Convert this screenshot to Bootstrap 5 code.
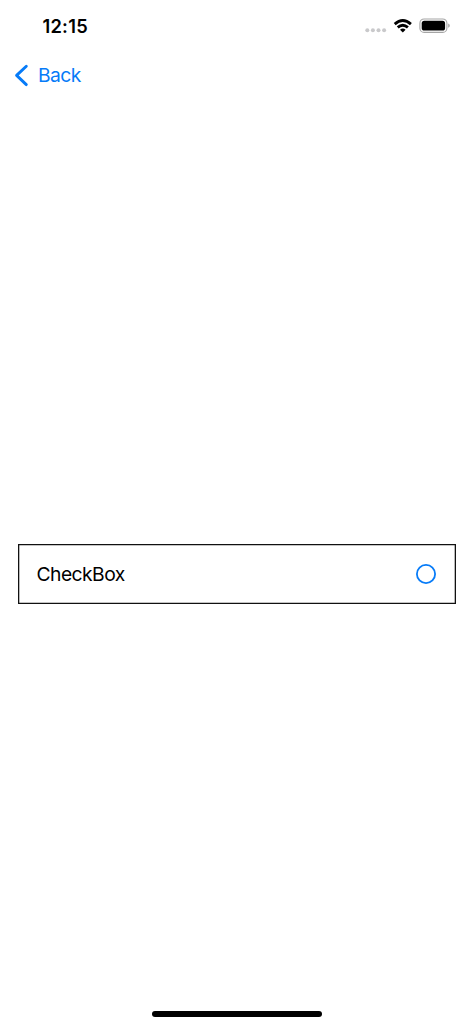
<!DOCTYPE html>
<html lang="en">
<head>
    <meta charset="UTF-8">
    <title>CheckBox</title>
    <meta name="viewport" content="width=device-width, initial-scale=1">
    <link href="https://cdn.jsdelivr.net/npm/bootstrap@5.3.2/dist/css/bootstrap.min.css" rel="stylesheet">
    <style>
        body {
            font-family: Inter, "Liberation Sans", sans-serif;
            font-size: 19.3px;
            line-height: 24px;
            color: #000;
            background: #fff;
        }
        .status-bar {
            height: 51px;
            padding: 0 24px 0 42.5px;
        }
        .clock {
            font-size: 18.3px;
            font-weight: 600;
            letter-spacing: 0.25px;
        }
        .top-nav {
            height: 48px;
            padding-left: 14px;
        }
        .back-link {
            color: #067bf8;
            gap: 9px;
            letter-spacing: -0.6px;
        }
        .check-row {
            width: 438px;
            height: 60px;
            margin: 445px 0 0 18px;
            padding: 0 19px 0 17.5px;
            border: 1px solid #111;
            box-shadow: inset 0 0 0 0.3px #111;
            letter-spacing: -0.55px;
        }
        .round-check {
            width: 20px;
            height: 20px;
            margin: 0;
            border: 0;
            box-shadow: inset 0 0 0 1.8px #067bf8;
        }
        .home-bar {
            width: 170px;
            height: 6px;
            margin-bottom: 9px;
            border-radius: 3px;
            background: #000;
        }
    </style>
</head>
<body>
<div class="d-flex flex-column vh-100">
    <header>
        <div class="status-bar d-flex justify-content-between align-items-center">
            <span class="clock">12:15</span>
            <!-- signal, wifi, battery -->
            <svg width="86" height="18" viewBox="364 17 86 18" aria-hidden="true">
                <g fill="#c9c9cb">
                    <circle cx="367.3" cy="30.3" r="2"/>
                    <circle cx="372.9" cy="30.3" r="2"/>
                    <circle cx="378.5" cy="30.3" r="2"/>
                    <circle cx="384.1" cy="30.3" r="2"/>
                </g>
                <g fill="none" stroke="#000" stroke-width="2.8">
                    <path d="M394.7 24.1Q402.8 16.8 410.9 24.1"/>
                    <path d="M397.7 27.4Q402.8 23 407.9 27.4"/>
                </g>
                <path d="M400 29.7Q402.8 27.5 405.6 29.7L402.8 32.6Z"/>
                <rect x="419.9" y="19" width="27" height="13.4" rx="4.2" fill="none" stroke="#a5a5a5" stroke-width="1.1"/>
                <rect x="421.7" y="20.8" width="23.4" height="9.8" rx="2.6"/>
                <path d="M448.2 23.6Q449.8 24.2 449.8 25.7T448.2 27.8Z" fill="#a5a5a5"/>
            </svg>
        </div>
        <nav class="top-nav d-flex align-items-center">
            <a href="#" class="back-link d-flex align-items-center text-decoration-none">
                <svg width="15" height="24" viewBox="0 0 15 24" fill="none" stroke="currentColor" stroke-width="2.9" stroke-linecap="round" stroke-linejoin="round" aria-hidden="true">
                    <path d="M12.3 3.2L2.6 12.4L12.3 21.6"/>
                </svg>
                <span>Back</span>
            </a>
        </nav>
    </header>
    <main class="flex-grow-1">
        <div class="check-row d-flex justify-content-between align-items-center">
            <label for="check">CheckBox</label>
            <input class="form-check-input round-check rounded-circle" type="checkbox" id="check">
        </div>
    </main>
    <div class="home-bar align-self-center"></div>
</div>
<script src="https://cdn.jsdelivr.net/npm/bootstrap@5.3.2/dist/js/bootstrap.bundle.min.js"></script>
</body>
</html>
